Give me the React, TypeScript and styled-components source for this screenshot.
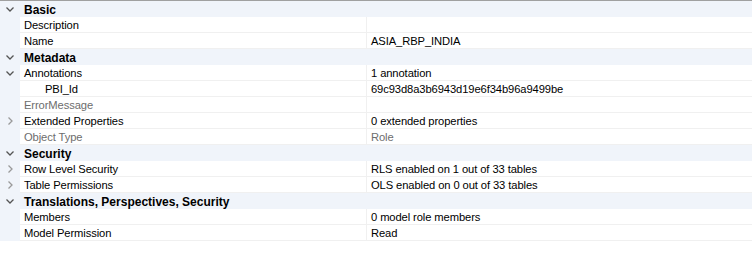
import styled, { createGlobalStyle } from 'styled-components';

const GlobalStyle = createGlobalStyle`
  html, body {
    margin: 0;
    padding: 0;
    background: #ffffff;
  }
  body {
    font-family: "Liberation Sans", Arial, sans-serif;
    font-size: 11px;
    color: #000;
  }
`;

const Grid = styled.div`
  width: 752px;
  border-top: 1px solid #a0a0a0;
`;

const Row = styled.div<{ $header?: boolean }>`
  display: grid;
  grid-template-columns: 20px 347px 1fr;
  height: 16px;
  background: ${(p) => (p.$header ? '#f0f4fa' : '#ffffff')};
`;

const Gutter = styled.div`
  background: #f0f4fa;
  display: flex;
  align-items: center;
  justify-content: center;
`;

const NameCell = styled.div<{ $header?: boolean; $muted?: boolean; $indent?: number }>`
  display: flex;
  align-items: center;
  padding: 1px 0 0 ${(p) => 4 + (p.$indent ?? 0)}px;
  font-size: ${(p) => (p.$header ? '12px' : '11.2px')};
  letter-spacing: ${(p) => (p.$header ? '0' : '-0.1px')};
  font-weight: ${(p) => (p.$header ? 700 : 400)};
  color: ${(p) => (p.$muted ? '#6d6d6d' : '#000')};
  border-bottom: ${(p) => (p.$header ? 'none' : '1px solid #f0f0f0')};
  border-right: ${(p) => (p.$header ? 'none' : '1px solid #f0f0f0')};
  white-space: nowrap;
  box-sizing: border-box;
  line-height: 14px;
`;

const ValueCell = styled.div<{ $header?: boolean; $muted?: boolean }>`
  display: flex;
  align-items: center;
  padding: 1px 0 0 4px;
  font-size: 11.2px;
  letter-spacing: -0.1px;
  color: ${(p) => (p.$muted ? '#6d6d6d' : '#000')};
  border-bottom: ${(p) => (p.$header ? 'none' : '1px solid #f0f0f0')};
  white-space: nowrap;
  box-sizing: border-box;
  line-height: 14px;
`;

function Chevron({ open }: { open: boolean }) {
  return (
    <svg width="10" height="10" viewBox="0 0 10 10">
      {open ? (
        <path d="M1.5 3.5 L5 7 L8.5 3.5" fill="none" stroke="#555" strokeWidth="1.3" />
      ) : (
        <path d="M3.5 1.5 L7 5 L3.5 8.5" fill="none" stroke="#9a9a9a" strokeWidth="1.3" />
      )}
    </svg>
  );
}

type Item = {
  name: string;
  value?: string;
  header?: boolean;
  toggle?: 'open' | 'closed';
  muted?: boolean;
  indent?: number;
};

const items: Item[] = [
  { name: 'Basic', header: true, toggle: 'open' },
  { name: 'Description', value: '' },
  { name: 'Name', value: 'ASIA_RBP_INDIA' },
  { name: 'Metadata', header: true, toggle: 'open' },
  { name: 'Annotations', value: '1 annotation', toggle: 'open' },
  { name: 'PBI_Id', value: '69c93d8a3b6943d19e6f34b96a9499be', indent: 21 },
  { name: 'ErrorMessage', value: '', muted: true },
  { name: 'Extended Properties', value: '0 extended properties', toggle: 'closed' },
  { name: 'Object Type', value: 'Role', muted: true },
  { name: 'Security', header: true, toggle: 'open' },
  { name: 'Row Level Security', value: 'RLS enabled on 1 out of 33 tables', toggle: 'closed' },
  { name: 'Table Permissions', value: 'OLS enabled on 0 out of 33 tables', toggle: 'closed' },
  { name: 'Translations, Perspectives, Security', header: true, toggle: 'open' },
  { name: 'Members', value: '0 model role members' },
  { name: 'Model Permission', value: 'Read' },
];

export default function App() {
  return (
    <>
      <GlobalStyle />
      <Grid>
        {items.map((it) => (
          <Row key={it.name} $header={it.header}>
            <Gutter>{it.toggle && <Chevron open={it.toggle === 'open'} />}</Gutter>
            <NameCell $header={it.header} $muted={it.muted} $indent={it.indent}>
              {it.name}
            </NameCell>
            <ValueCell $header={it.header} $muted={it.muted}>
              {it.value}
            </ValueCell>
          </Row>
        ))}
      </Grid>
    </>
  );
}
